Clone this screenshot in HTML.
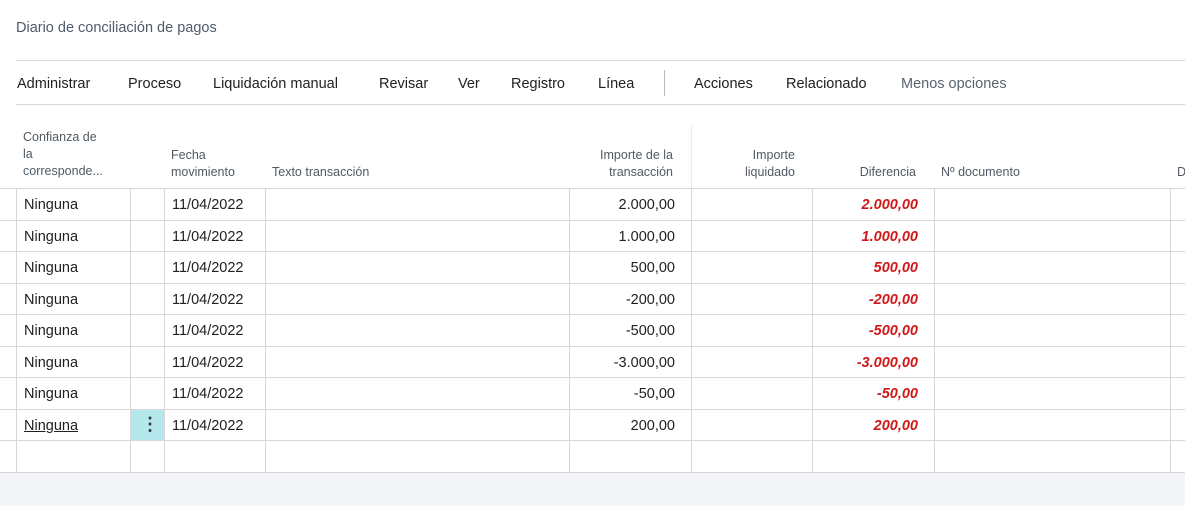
<!DOCTYPE html>
<html><head><meta charset="utf-8"><style>
body{margin:0;width:1185px;height:506px;background:#fff;position:relative;overflow:hidden;font-family:"Liberation Sans",sans-serif;color:#212121}
.a{position:absolute;white-space:nowrap}
.hl{position:absolute;height:1px;background:#d6d6dc}
.vl{position:absolute;width:1px;background:#d6d6dc}
.t{font-size:14.5px;top:76px;color:#212121}
.h{font-size:12.5px;color:#505a64;line-height:17px}
.c{font-size:14.5px}
.r{text-align:right}
.d{color:#d01818;font-weight:bold;font-style:italic}
</style></head><body>
<div class="a" style="left:16px;top:20px;font-size:14.5px;color:#505a6a">Diario de conciliación de pagos</div>
<div class="hl" style="left:16px;top:60px;width:1169px"></div>
<div class="hl" style="left:16px;top:104px;width:1169px"></div>
<div class="a t" style="left:17px">Administrar</div>
<div class="a t" style="left:128px">Proceso</div>
<div class="a t" style="left:213px">Liquidación manual</div>
<div class="a t" style="left:379px">Revisar</div>
<div class="a t" style="left:458px">Ver</div>
<div class="a t" style="left:511px">Registro</div>
<div class="a t" style="left:598px">Línea</div>
<div class="vl" style="left:664px;top:70px;height:26px;background:#b8b8c0"></div>
<div class="a t" style="left:694px">Acciones</div>
<div class="a t" style="left:786px">Relacionado</div>
<div class="a t" style="left:901px;color:#5a6470">Menos opciones</div>

<div class="a h" style="left:23px;top:129px">Confianza de<br>la<br>corresponde...</div>
<div class="a h" style="left:171px;top:147px">Fecha<br>movimiento</div>
<div class="a h" style="left:272px;top:164px">Texto transacción</div>
<div class="a h r" style="right:512px;top:147px">Importe de la<br>transacción</div>
<div class="a h r" style="right:390px;top:147px">Importe<br>liquidado</div>
<div class="a h r" style="right:269px;top:164px">Diferencia</div>
<div class="a h" style="left:941px;top:164px">Nº documento</div>
<div class="a h" style="left:1177px;top:164px">D</div>
<div class="vl" style="left:691px;top:125px;height:63px;background:#ececf0"></div>

<div style="position:absolute;left:0;top:472px;width:1185px;height:34px;background:#f4f5f7"></div>
<div class="a" style="left:131px;top:410px;width:33px;height:30px;background:#b4e8ec"></div>
<div class="a" style="left:141px;top:414px;font-size:18px;font-weight:bold;color:#333">⋮</div>

<div id="g"></div>
<script>
var ys=[188,220,251,283,314,346,377,409,440,472],xs=[16,130,164,265,569,691,812,934,1170];
var s='';
ys.forEach(y=>s+='<div class="hl" style="left:0;top:'+y+'px;width:1185px"></div>');
xs.forEach(x=>s+='<div class="vl" style="left:'+x+'px;top:188px;height:284px"></div>');
var v=['2.000,00','1.000,00','500,00','-200,00','-500,00','-3.000,00','-50,00','200,00'];
v.forEach((n,i)=>{var t=ys[i]+9;
s+='<div class="a c" style="left:24px;top:'+t+'px;'+(i==7?'text-decoration:underline':'')+'">Ninguna</div>';
s+='<div class="a c" style="left:172px;top:'+t+'px">11/04/2022</div>';
s+='<div class="a c r" style="right:510px;top:'+t+'px">'+n+'</div>';
s+='<div class="a c r d" style="right:267px;top:'+t+'px">'+n+'</div>';});
document.getElementById('g').innerHTML=s;
</script>
</body></html>
